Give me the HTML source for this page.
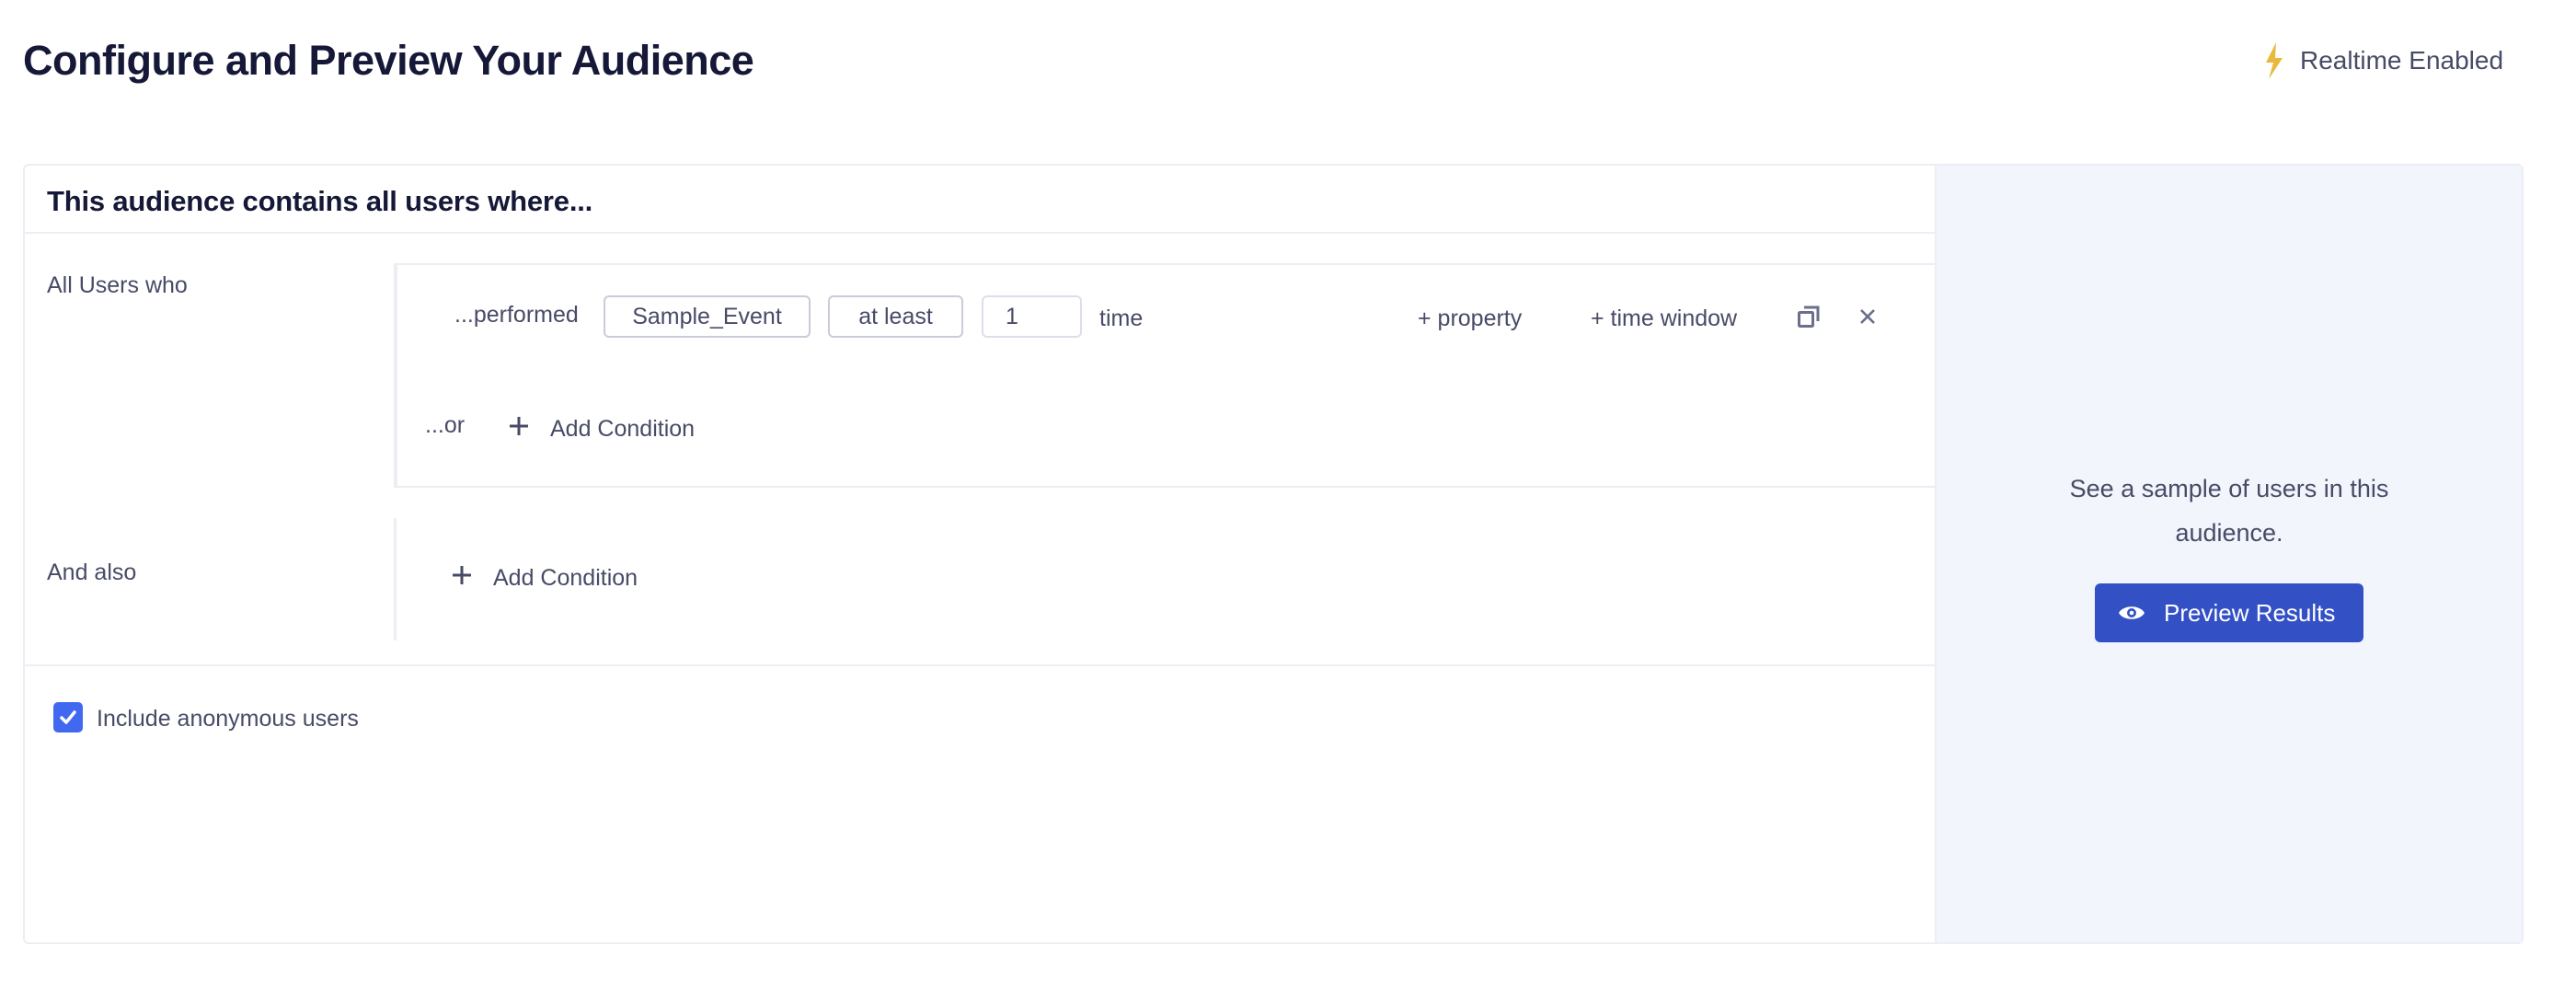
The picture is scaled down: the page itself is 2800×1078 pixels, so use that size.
<!DOCTYPE html>
<html><head><meta charset="utf-8"><style>
*{margin:0;padding:0;box-sizing:border-box}
body{width:2800px;height:1078px;background:#fff;font-family:"Liberation Sans",sans-serif;color:#474b66;position:relative;overflow:hidden}
.a{position:absolute;white-space:nowrap}
.t{font-size:25px;color:#474b66}
.box{position:absolute;border:2px solid #c9ccd9;border-radius:6px;font-size:25px;color:#474b66;display:flex;align-items:center;justify-content:center}
</style></head><body>
<div class="a" style="left:25px;top:40px;font-size:45px;font-weight:bold;color:#151837;letter-spacing:-0.5px">Configure and Preview Your Audience</div>
<svg class="a" style="left:2460px;top:46px" width="24" height="40" viewBox="0 0 24 40"><path d="M14 0 L3 22 L11 22 L6 40 L21 17 L13 17 Z" fill="#e8b93c"/></svg>
<div class="a" style="left:2500px;top:50px;font-size:28px;color:#474b66">Realtime Enabled</div>

<div class="a" style="left:25px;top:178px;width:2718px;height:848px;border:2px solid #eceef3;border-radius:6px;background:#fff"></div>
<div class="a" style="left:2103px;top:180px;width:638px;height:844px;background:#f3f5fd;border-left:2px solid #eceef3"></div>
<div class="a" style="left:27px;top:252px;width:2076px;height:2px;background:#eceef3"></div>
<div class="a" style="left:51px;top:201px;font-size:31px;font-weight:bold;color:#151837;letter-spacing:-0.2px">This audience contains all users where...</div>

<div class="a t" style="left:51px;top:296px">All Users who</div>
<div class="a" style="left:428px;top:286px;width:1675px;height:244px;border:2px solid #eceef3;border-right:none;border-left:4px solid #eceef3"></div>
<div class="a t" style="left:494px;top:328px">...performed</div>
<div class="box" style="left:656px;top:321px;width:225px;height:46px">Sample_Event</div>
<div class="box" style="left:900px;top:321px;width:147px;height:46px">at least</div>
<div class="box" style="left:1067px;top:321px;width:109px;height:46px;justify-content:flex-start;padding-left:24px;border-color:#dcdfe8">1</div>
<div class="a t" style="left:1195px;top:332px">time</div>
<div class="a t" style="left:1541px;top:332px">+ property</div>
<div class="a t" style="left:1729px;top:332px">+ time window</div>
<svg class="a" style="left:1952px;top:330px" width="28" height="28" viewBox="0 0 28 28" fill="none" stroke="#6b6f8a" stroke-width="3"><rect x="3.5" y="9.5" width="15" height="15" rx="1"/><path d="M9 4 H24 V19"/></svg>
<svg class="a" style="left:2020px;top:334px" width="20" height="20" viewBox="0 0 20 20" stroke="#6b6f8a" stroke-width="2.6"><path d="M3 3 L17 17 M17 3 L3 17"/></svg>
<div class="a t" style="left:462px;top:448px">...or</div>
<svg class="a" style="left:552px;top:451px" width="24" height="24" viewBox="0 0 24 24" stroke="#474b66" stroke-width="3"><path d="M12 2 V22 M2 12 H22"/></svg>
<div class="a t" style="left:598px;top:452px">Add Condition</div>

<div class="a t" style="left:51px;top:608px">And also</div>
<div class="a" style="left:428px;top:563px;width:3px;height:133px;background:#eceef3"></div>
<svg class="a" style="left:490px;top:613px" width="24" height="24" viewBox="0 0 24 24" stroke="#474b66" stroke-width="3"><path d="M12 2 V22 M2 12 H22"/></svg>
<div class="a t" style="left:536px;top:614px">Add Condition</div>
<div class="a" style="left:27px;top:722px;width:2076px;height:2px;background:#eceef3"></div>

<div class="a" style="left:58px;top:763px;width:32px;height:33px;background:#4169f0;border-radius:5px"></div>
<svg class="a" style="left:58px;top:763px" width="32" height="33" viewBox="0 0 32 33" fill="none" stroke="#fff" stroke-width="3.5" stroke-linecap="round" stroke-linejoin="round"><path d="M9 17 L14 22 L23 11"/></svg>
<div class="a t" style="left:105px;top:767px">Include anonymous users</div>

<div class="a" style="left:2103px;top:507px;width:640px;text-align:center;font-size:27px;line-height:48px;color:#474b66;white-space:normal">See a sample of users in this<br>audience.</div>
<div class="a" style="left:2277px;top:634px;width:292px;height:64px;background:#3351c5;border-radius:6px"></div>
<svg class="a" style="left:2302px;top:654px" width="30" height="24" viewBox="0 0 30 24"><path d="M1 12 C6 3 24 3 29 12 C24 21 6 21 1 12 Z" fill="#fff"/><circle cx="15" cy="12" r="5" fill="#3351c5"/><circle cx="15" cy="12" r="2.3" fill="#fff"/></svg>
<div class="a" style="left:2352px;top:651px;font-size:26px;color:#fff">Preview Results</div>
</body></html>
